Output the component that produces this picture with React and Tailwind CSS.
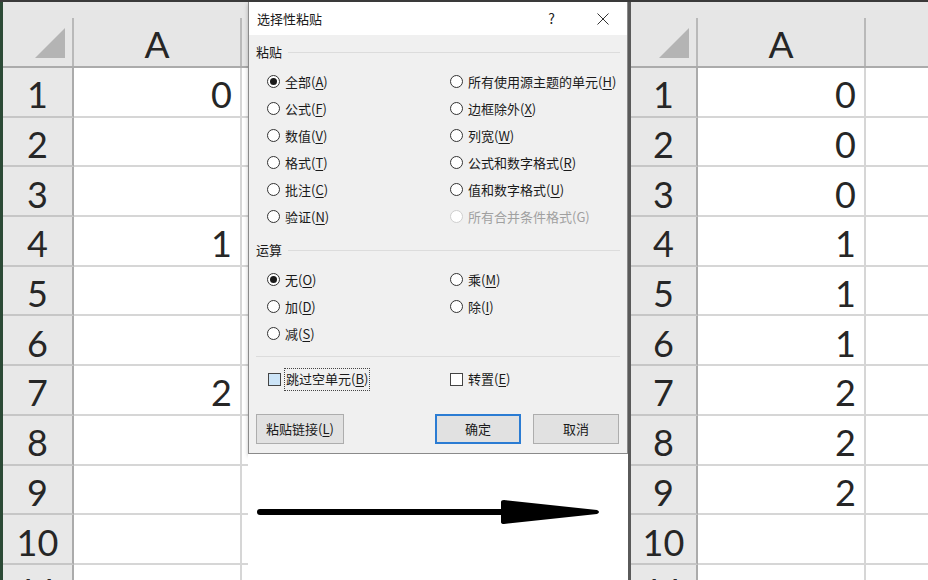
import React from 'react';

const SHEET_FONT = { fontFamily: 'Lato, "Liberation Sans", sans-serif' };
const UI_FONT = { fontFamily: '"Noto Sans CJK SC", "Noto Sans", sans-serif' };

function Sheet({ edge, headW, colW, values }) {
  const rows = Array.from({ length: 11 }, (_, i) => i + 1);
  return (
    <div className={`flex flex-col h-full overflow-hidden text-[#262626] ${edge}`} style={SHEET_FONT}>
      {/* column header row */}
      <div className="flex h-[66px] shrink-0 bg-[#e6e6e6] border-b-2 border-[#ababab]">
        <div className="flex items-end shrink-0" style={{ width: headW }}>
          <div className="flex-1 flex justify-end pb-[8px] pr-[7px]">
            <svg width="30" height="30" viewBox="0 0 30 30">
              <polygon points="30,0 30,30 0,30" fill="#b4b4b4" />
            </svg>
          </div>
          <div className="w-[2px] h-[48px] bg-[#b9b9b9]" />
        </div>
        <div className="flex items-end shrink-0" style={{ width: colW }}>
          <div className="flex-1 text-center text-[37px] leading-[44px]">A</div>
          <div className="w-[2px] h-[48px] bg-[#b9b9b9]" />
        </div>
        <div className="flex-1" />
      </div>
      {rows.map((r) => (
        <div key={r} className="flex h-[49.7px] shrink-0">
          <div
            className="shrink-0 flex items-center justify-center bg-[#e8e8e8] border-r-2 border-b-2 border-r-[#ababab] border-b-[#c6c6c6] text-[36px] pt-[5px]"
            style={{ width: headW }}
          >
            {r}
          </div>
          <div
            className="shrink-0 flex items-center justify-end pr-[8px] pt-[5px] bg-white border-r-2 border-b-2 border-[#d6d6d6] text-[36px]"
            style={{ width: colW }}
          >
            {values[r - 1] ?? ''}
          </div>
          <div className="flex-1 bg-white border-b-2 border-[#d6d6d6]" />
        </div>
      ))}
    </div>
  );
}

function Acc({ children }) {
  return <span className="underline underline-offset-2">{children}</span>;
}

function Radio({ checked, disabled, children }) {
  return (
    <div className={`flex items-center h-[27px] gap-[5px] ${disabled ? 'text-[#a0a0a0]' : 'text-[#1a1a1a]'}`}>
      <div
        className={`w-[13px] h-[13px] rounded-full border bg-white flex items-center justify-center ${
          disabled ? 'border-[#cfcfcf]' : 'border-[#333]'
        }`}
      >
        {checked && <div className="w-[7px] h-[7px] rounded-full bg-[#1a1a1a]" />}
      </div>
      <span className="whitespace-nowrap">{children}</span>
    </div>
  );
}

function GroupTitle({ children }) {
  return (
    <div className="flex items-center h-[20px] gap-[6px]">
      <span className="text-[#1a1a1a]">{children}</span>
      <div className="flex-1 h-px bg-[#dcdcdc]" />
    </div>
  );
}

function Button({ primary, className = '', children }) {
  return (
    <div
      className={`h-[30px] flex items-center justify-center bg-[#e1e1e1] text-[#1a1a1a] ${
        primary ? 'border-2 border-[#2b7cd3]' : 'border border-[#adadad]'
      } ${className}`}
    >
      {children}
    </div>
  );
}

function Dialog() {
  return (
    <div className="flex flex-col border-x border-b border-[#8a8a8a] bg-[#f0f0f0] text-[13px] shadow-[0_2px_4px_rgba(0,0,0,0.25)]" style={UI_FONT}>
      <div className="h-[33px] bg-white flex items-center pl-[8px] pr-[18px]">
        <span className="text-[#1a1a1a]">选择性粘贴</span>
        <span className="ml-auto mr-[42px] text-[14px] text-[#222]">?</span>
        <svg width="12" height="12" viewBox="0 0 12 12">
          <path d="M0.5 0.5 L11.5 11.5 M11.5 0.5 L0.5 11.5" stroke="#333" strokeWidth="1" />
        </svg>
      </div>
      <div className="flex flex-col px-[7px] pt-[7px] pb-[9px]">
        <GroupTitle>粘贴</GroupTitle>
        <div className="grid grid-cols-[183px_1fr] pl-[11px] mt-[6px]">
          <Radio checked>全部(<Acc>A</Acc>)</Radio>
          <Radio>所有使用源主题的单元(<Acc>H</Acc>)</Radio>
          <Radio>公式(<Acc>F</Acc>)</Radio>
          <Radio>边框除外(<Acc>X</Acc>)</Radio>
          <Radio>数值(<Acc>V</Acc>)</Radio>
          <Radio>列宽(<Acc>W</Acc>)</Radio>
          <Radio>格式(<Acc>T</Acc>)</Radio>
          <Radio>公式和数字格式(<Acc>R</Acc>)</Radio>
          <Radio>批注(<Acc>C</Acc>)</Radio>
          <Radio>值和数字格式(<Acc>U</Acc>)</Radio>
          <Radio>验证(<Acc>N</Acc>)</Radio>
          <Radio disabled>所有合并条件格式(G)</Radio>
        </div>
        <div className="mt-[10px]">
          <GroupTitle>运算</GroupTitle>
        </div>
        <div className="grid grid-cols-[183px_1fr] pl-[11px] mt-[6px]">
          <Radio checked>无(<Acc>O</Acc>)</Radio>
          <Radio>乘(<Acc>M</Acc>)</Radio>
          <Radio>加(<Acc>D</Acc>)</Radio>
          <Radio>除(<Acc>I</Acc>)</Radio>
          <Radio>减(<Acc>S</Acc>)</Radio>
        </div>
        <div className="mt-[9px] h-px bg-[#dcdcdc]" />
        <div className="grid grid-cols-[182px_1fr] pl-[12px] mt-[10px] h-[24px]">
          <div className="flex items-center gap-[3px]">
            <div className="w-[13px] h-[13px] border border-[#444] bg-[#cce4f7]" />
            <span className="px-[1px] h-[23px] flex items-center border border-dotted border-[#444] text-[#1a1a1a]">
              跳过空单元(<Acc>B</Acc>)
            </span>
          </div>
          <div className="flex items-center gap-[5px]">
            <div className="w-[13px] h-[13px] border border-[#444] bg-white" />
            <span className="text-[#1a1a1a]">转置(<Acc>E</Acc>)</span>
          </div>
        </div>
        <div className="flex items-center mt-[23px] pr-[1px]">
          <Button className="w-[88px]">粘贴链接(<Acc>L</Acc>)</Button>
          <Button primary className="w-[86px] ml-auto">确定</Button>
          <Button className="w-[86px] ml-[12px]">取消</Button>
        </div>
      </div>
    </div>
  );
}

export default function App() {
  return (
    <div className="w-[928px] h-[580px] overflow-hidden flex bg-white border-t-2 border-[#3a3a3a]">
      <div className="w-[248px] shrink-0">
        <Sheet edge="border-l-[3px] border-l-[#2c4a36]" headW={71} colW={168} values={['0', '', '', '1', '', '', '2']} />
      </div>
      <div className="w-[380px] shrink-0 flex flex-col">
        <Dialog />
        <div className="flex-1 bg-white flex items-center pl-[8px] pb-[10px]">
          <svg width="350" height="30" viewBox="0 0 350 30">
            <line x1="4" y1="15" x2="248" y2="15" stroke="#000" strokeWidth="6" strokeLinecap="round" />
            <path d="M245 5 Q245 3 248 3 L341 13 Q345 15 341 17 L248 27 Q245 27 245 25 Z" fill="#000" />
          </svg>
        </div>
      </div>
      <div className="flex-1">
        <Sheet edge="border-l-[3px] border-l-[#5a5a5a]" headW={67} colW={168} values={['0', '0', '0', '1', '1', '1', '2', '2', '2']} />
      </div>
    </div>
  );
}
